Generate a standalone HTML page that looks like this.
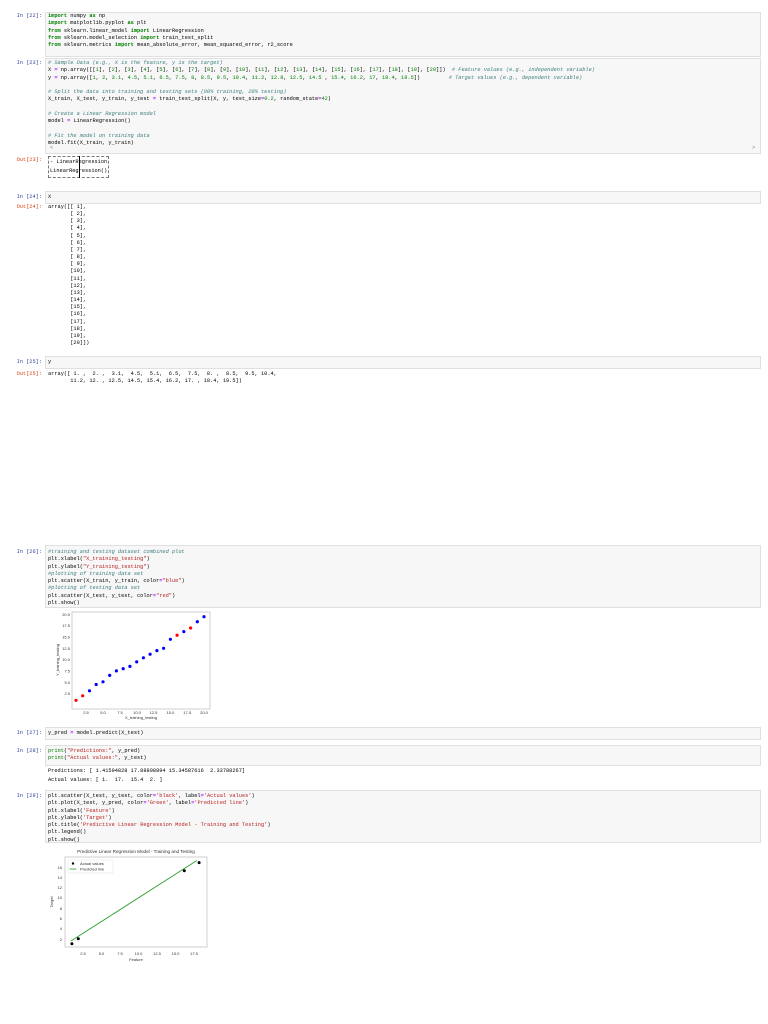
<!DOCTYPE html>
<html><head><meta charset="utf-8"><style>
*{margin:0;padding:0;box-sizing:border-box}
body{width:768px;height:1024px;background:#fff;position:relative;overflow:hidden;font-family:"Liberation Mono",monospace;font-size:5.3px;color:#000}
.p{position:absolute;left:0;width:42px;text-align:right;font-size:5.3px;line-height:7.2px}
.in{color:#303F9F}.out{color:#D84315}
.box{position:absolute;left:45px;width:716px;background:#f7f7f7;border:1px solid #e0e0e0}
.c{position:absolute;left:48px;white-space:pre;line-height:7.25px}
.k{color:#008000;font-weight:bold}.n{color:#008000}.s{color:#BA2121}.cm{color:#408080;font-style:italic}.o{color:#AA22FF;font-weight:bold}
svg{position:absolute;left:0;top:0}
svg text{font-family:"Liberation Sans",sans-serif;font-size:4px;fill:#333}
</style></head><body>

<div class="box" style="top:12px;height:45px"></div>
<div class="p in" style="top:13px">In [22]:</div>
<div class="c" style="top:13px"><span class="k">import</span> numpy <span class="k">as</span> np
<span class="k">import</span> matplotlib.pyplot <span class="k">as</span> plt
<span class="k">from</span> sklearn.linear_model <span class="k">import</span> LinearRegression
<span class="k">from</span> sklearn.model_selection <span class="k">import</span> train_test_split
<span class="k">from</span> sklearn.metrics <span class="k">import</span> mean_absolute_error, mean_squared_error, r2_score</div>

<div class="box" style="top:58px;height:96px"></div>
<div class="p in" style="top:60px">In [23]:</div>
<div class="c" style="top:60px"><span class="cm"># Sample Data (e.g., X is the feature, y is the target)</span>
X <span class="o">=</span> np.array([[<span class="n">1</span>], [<span class="n">2</span>], [<span class="n">3</span>], [<span class="n">4</span>], [<span class="n">5</span>], [<span class="n">6</span>], [<span class="n">7</span>], [<span class="n">8</span>], [<span class="n">9</span>], [<span class="n">10</span>], [<span class="n">11</span>], [<span class="n">12</span>], [<span class="n">13</span>], [<span class="n">14</span>], [<span class="n">15</span>], [<span class="n">16</span>], [<span class="n">17</span>], [<span class="n">18</span>], [<span class="n">19</span>], [<span class="n">20</span>]])  <span class="cm"># Feature values (e.g., independent variable)</span>
y <span class="o">=</span> np.array([<span class="n">1</span>, <span class="n">2</span>, <span class="n">3.1</span>, <span class="n">4.5</span>, <span class="n">5.1</span>, <span class="n">6.5</span>, <span class="n">7.5</span>, <span class="n">8</span>, <span class="n">8.5</span>, <span class="n">9.5</span>, <span class="n">10.4</span>, <span class="n">11.2</span>, <span class="n">12.8</span>, <span class="n">12.5</span>, <span class="n">14.5</span> , <span class="n">15.4</span>, <span class="n">16.2</span>, <span class="n">17</span>, <span class="n">18.4</span>, <span class="n">19.5</span>])         <span class="cm"># Target values (e.g., dependent variable)</span>

<span class="cm"># Split the data into training and testing sets (80% training, 20% testing)</span>
X_train, X_test, y_train, y_test <span class="o">=</span> train_test_split(X, y, test_size<span class="o">=</span><span class="n">0.2</span>, random_state<span class="o">=</span><span class="n">42</span>)

<span class="cm"># Create a Linear Regression model</span>
model <span class="o">=</span> LinearRegression()

<span class="cm"># Fit the model on training data</span>
model.fit(X_train, y_train)</div>
<div class="c" style="top:145px;left:50px;color:#888">&lt;</div>
<div class="c" style="top:145px;left:752px;color:#888">&gt;</div>

<div class="p out" style="top:157px">Out[23]:</div>
<div style="position:absolute;left:48px;top:156px;width:61px;height:22px;border:1px dashed #777"></div>
<div style="position:absolute;left:79px;top:156px;width:1px;height:22px;background:#000"></div>
<div class="c" style="top:158px;left:50px;line-height:9px">- LinearRegression
LinearRegression()</div>

<div class="box" style="top:191px;height:13px"></div>
<div class="p in" style="top:194px">In [24]:</div>
<div class="c" style="top:194px">X</div>
<div class="p out" style="top:204px">Out[24]:</div>
<div class="c" style="top:204px;line-height:7.15px">array([[ 1],
       [ 2],
       [ 3],
       [ 4],
       [ 5],
       [ 6],
       [ 7],
       [ 8],
       [ 9],
       [10],
       [11],
       [12],
       [13],
       [14],
       [15],
       [16],
       [17],
       [18],
       [19],
       [20]])</div>

<div class="box" style="top:356px;height:13px"></div>
<div class="p in" style="top:359px">In [25]:</div>
<div class="c" style="top:359px">y</div>
<div class="p out" style="top:371px">Out[25]:</div>
<div class="c" style="top:371px">array([ 1. ,  2. ,  3.1,  4.5,  5.1,  6.5,  7.5,  8. ,  8.5,  9.5, 10.4,
       11.2, 12. , 12.5, 14.5, 15.4, 16.2, 17. , 18.4, 19.5])</div>

<div class="box" style="top:545px;height:63px"></div>
<div class="p in" style="top:549px">In [26]:</div>
<div class="c" style="top:549px"><span class="cm">#training and testing dataset combined plot</span>
plt.xlabel(<span class="s">"X_training_testing"</span>)
plt.ylabel(<span class="s">"Y_training_testing"</span>)
<span class="cm">#plotting of training data set</span>
plt.scatter(X_train, y_train, color<span class="o">=</span><span class="s">"blue"</span>)
<span class="cm">#plotting of testing data set</span>
plt.scatter(X_test, y_test, color<span class="o">=</span><span class="s">"red"</span>)
plt.show()</div>

<div class="box" style="top:727px;height:13px"></div>
<div class="p in" style="top:730px">In [27]:</div>
<div class="c" style="top:730px">y_pred <span class="o">=</span> model.predict(X_test)</div>

<div class="box" style="top:745px;height:21px"></div>
<div class="p in" style="top:748px">In [28]:</div>
<div class="c" style="top:748px"><span class="n">print</span>(<span class="s">"Predictions:"</span>, y_pred)
<span class="n">print</span>(<span class="s">"Actual values:"</span>, y_test)</div>
<div class="c" style="top:767px;line-height:8.5px">Predictions: [ 1.41594828 17.88898894 15.34587616  2.33788267]
Actual values: [ 1.  17.  15.4  2. ]</div>

<div class="box" style="top:790px;height:53px"></div>
<div class="p in" style="top:793px">In [29]:</div>
<div class="c" style="top:793px">plt.scatter(X_test, y_test, color<span class="o">=</span><span class="s">'black'</span>, label<span class="o">=</span><span class="s">'Actual values'</span>)
plt.plot(X_test, y_pred, color<span class="o">=</span><span class="s">'Green'</span>, label<span class="o">=</span><span class="s">'Predicted line'</span>)
plt.xlabel(<span class="s">'Feature'</span>)
plt.ylabel(<span class="s">'Target'</span>)
plt.title(<span class="s">'Predictive Linear Regression Model - Training and Testing'</span>)
plt.legend()
plt.show()</div>

<svg width="768" height="1024" viewBox="0 0 768 1024">
<!-- plot 1 -->
<rect x="72" y="612" width="138" height="97" fill="#fff" stroke="#bbb" stroke-width="0.7"/>
<g fill="#0000ff">
<circle cx="89.5" cy="690.8" r="1.6"/><circle cx="96.2" cy="684.5" r="1.6"/><circle cx="103" cy="681.8" r="1.6"/><circle cx="109.7" cy="675.4" r="1.6"/><circle cx="116.4" cy="670.9" r="1.6"/><circle cx="123.2" cy="668.7" r="1.6"/><circle cx="129.9" cy="666.4" r="1.6"/><circle cx="136.7" cy="661.9" r="1.6"/><circle cx="143.4" cy="657.8" r="1.6"/><circle cx="150.1" cy="654.2" r="1.6"/><circle cx="156.9" cy="650.6" r="1.6"/><circle cx="163.6" cy="648.3" r="1.6"/><circle cx="170.4" cy="639.3" r="1.6"/><circle cx="183.8" cy="631.6" r="1.6"/><circle cx="197.3" cy="621.7" r="1.6"/><circle cx="204" cy="616.7" r="1.6"/>
</g>
<g fill="#ff0000"><circle cx="76" cy="700.3" r="1.6"/><circle cx="82.7" cy="695.8" r="1.6"/><circle cx="177.1" cy="635.2" r="1.6"/><circle cx="190.6" cy="628" r="1.6"/></g>
<g text-anchor="end">
<text x="70" y="616">20.0</text><text x="70" y="627">17.5</text><text x="70" y="638.5">15.0</text><text x="70" y="650">12.5</text><text x="70" y="661">10.0</text><text x="70" y="672.5">7.5</text><text x="70" y="684">5.0</text><text x="70" y="695">2.5</text>
</g>
<g text-anchor="middle">
<text x="86" y="714">2.5</text><text x="103" y="714">5.0</text><text x="120" y="714">7.5</text><text x="137" y="714">10.0</text><text x="153.5" y="714">12.5</text><text x="170.4" y="714">15.0</text><text x="187.2" y="714">17.5</text><text x="204" y="714">20.0</text>
<text x="141" y="719">X_training_testing</text>
<text transform="translate(59,660) rotate(-90)">Y_training_testing</text>
</g>
<!-- plot 2 -->
<text x="136" y="853" text-anchor="middle" style="font-size:4.6px">Predictive Linear Regression Model - Training and Testing</text>
<rect x="65" y="857" width="142" height="90" fill="#fff" stroke="#bbb" stroke-width="0.7"/>
<line x1="71.1" y1="940.9" x2="196.9" y2="860.5" stroke="#2ca02c" stroke-width="0.9"/>
<g fill="#000"><circle cx="71.9" cy="943.8" r="1.5"/><circle cx="78.3" cy="938.7" r="1.5"/><circle cx="184.3" cy="870.8" r="1.5"/><circle cx="199.1" cy="862.6" r="1.5"/></g>
<rect x="68" y="860" width="45" height="13" fill="#fff" stroke="#ddd" stroke-width="0.4"/>
<circle cx="73" cy="863.5" r="1.2" fill="#000"/>
<line x1="69.5" y1="869" x2="76.5" y2="869" stroke="#2ca02c" stroke-width="0.8"/>
<text x="80" y="865">Actual values</text><text x="80" y="870.5">Predicted line</text>
<g text-anchor="end">
<text x="62" y="869">16</text><text x="62" y="879">14</text><text x="62" y="889">12</text><text x="62" y="899">10</text><text x="62" y="910">8</text><text x="62" y="920">6</text><text x="62" y="930">4</text><text x="62" y="941">2</text>
</g>
<g text-anchor="middle">
<text x="83" y="955">2.5</text><text x="101.5" y="955">5.0</text><text x="120" y="955">7.5</text><text x="138.5" y="955">10.0</text><text x="157" y="955">12.5</text><text x="175.5" y="955">15.0</text><text x="194" y="955">17.5</text>
<text x="136" y="961">Feature</text>
<text transform="translate(53,902) rotate(-90)">Target</text>
</g>
</svg>
</body></html>
